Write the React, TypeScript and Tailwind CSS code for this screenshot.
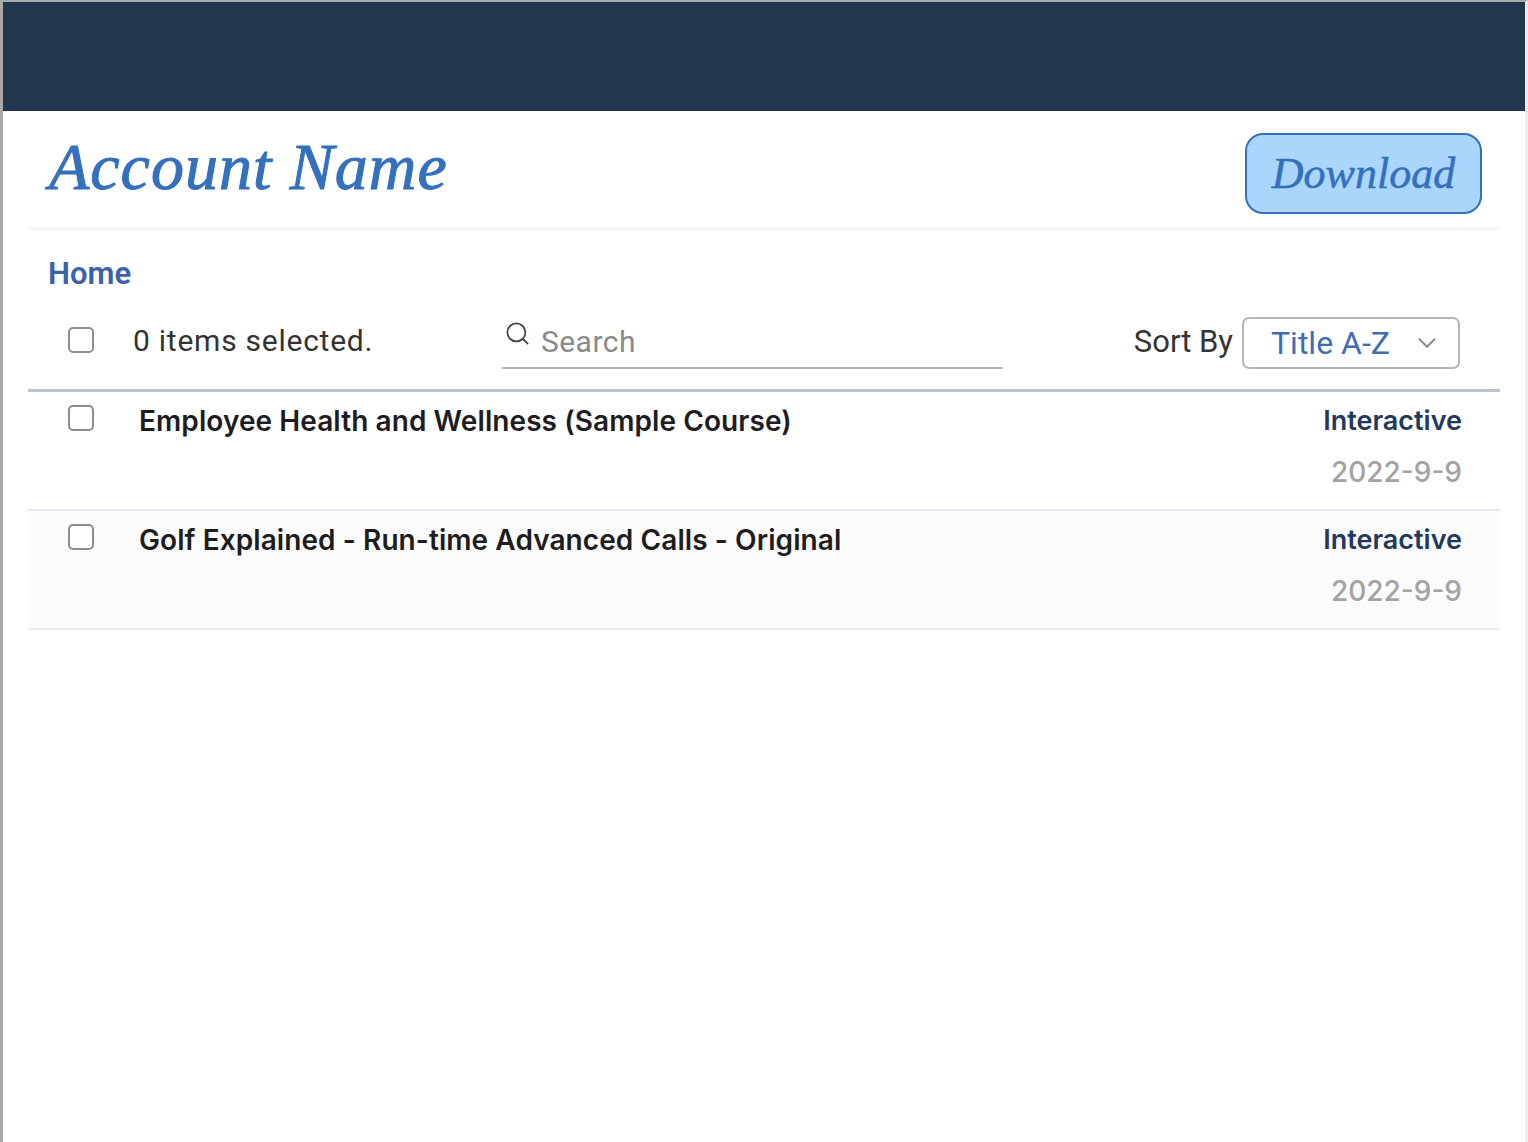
import { ChevronDown, Search } from "lucide-react"

const courses = [
  { title: "Employee Health and Wellness (Sample Course)", type: "Interactive", date: "2022-9-9", shaded: false },
  { title: "Golf Explained - Run-time Advanced Calls - Original", type: "Interactive", date: "2022-9-9", shaded: true },
]

function Checkbox() {
  return <span className="block h-[26px] w-[26px] rounded-[5px] border-2 border-[#8d8d8d] bg-white" />
}

export default function App() {
  return (
    <div className="h-[1142px] w-[1528px] overflow-hidden border-t-2 border-r-[3px] border-l-[3px] border-t-[#a9a9a9] border-r-[#eeeeee] border-l-[#a9a9a9] bg-white font-['Roboto',sans-serif]">
      <div className="h-[109px] bg-[#22364f]" />
      <div className="mx-[25px]">
        <div className="flex h-[119px] items-start justify-between border-b-[3px] border-[#f5f6f8] pr-[18px] pl-5">
          <h1 className="mt-[18px] ml-px font-['Liberation_Serif',serif] text-[66px] leading-[76px] tracking-[1px] text-[#3570bd] italic [-webkit-text-stroke:1px_#3570bd]">Account Name</h1>
          <button className="mt-[22px] h-[81px] w-[237px] rounded-[18px] border-2 border-[#3570bd] bg-[#abd6fb] font-['Liberation_Serif',serif] text-[44px] text-[#3570bd] italic [-webkit-text-stroke:0.5px_#3570bd]">Download</button>
        </div>
        <div className="pt-[25px] pl-5 text-[31px] leading-[38px] font-semibold text-[#3a62ab]">Home</div>
        <div className="flex h-[99px] items-center border-b-[3px] border-[#bcc2c9] pb-[2px]">
          <div className="ml-10 flex items-center">
            <Checkbox />
          </div>
          <span className="ml-[39px] w-[369px] text-[30px] tracking-[0.75px] text-[#333]">0 items selected.</span>
          <div className="mt-[5px] flex h-[52px] w-[501px] border-b-2 border-[#b5b5b5]">
            <Search className="mt-[3px] ml-[2px] h-[27px] w-[27px] text-[#444]" strokeWidth={1.6} />
            <span className="mt-[6px] ml-[10px] text-[30px] leading-[38px] tracking-[0.45px] text-[#8a8a8a]">Search</span>
          </div>
          <span className="mt-[5px] ml-auto text-[31px] text-[#333]">Sort By</span>
          <div className="mt-[5px] mr-10 ml-[9px] flex h-[52px] w-[218px] items-center rounded-[7px] border-2 border-[#b5b5b5] pr-[16px] pl-[27px]">
            <span className="text-[32px] text-[#3f6cb3]">Title A-Z</span>
            <ChevronDown className="ml-auto h-[30px] w-[30px] text-[#8a8a8a]" strokeWidth={1.6} />
          </div>
        </div>
        {courses.map((course) => (
          <div
            key={course.title}
            className={`flex h-[119px] border-b-2 border-[#e8ebf3] pr-[38px] pl-10 ${course.shaded ? "bg-[#fbfbfc]" : "bg-white"}`}
          >
            <div className="pt-[13px]">
              <Checkbox />
            </div>
            <div className="ml-[45px] pt-[10px] font-['Inter',sans-serif] text-[28px] leading-[38px] font-semibold tracking-[0.08px] text-[#1d1d1f]">{course.title}</div>
            <div className="ml-auto pt-[10px] text-right font-['Inter',sans-serif] text-[28px] leading-[38px]">
              <div className="text-[27px] font-semibold text-[#22385c]">{course.type}</div>
              <div className="mt-[13px] font-medium text-[#a3a3a3]">{course.date}</div>
            </div>
          </div>
        ))}
      </div>
    </div>
  )
}
